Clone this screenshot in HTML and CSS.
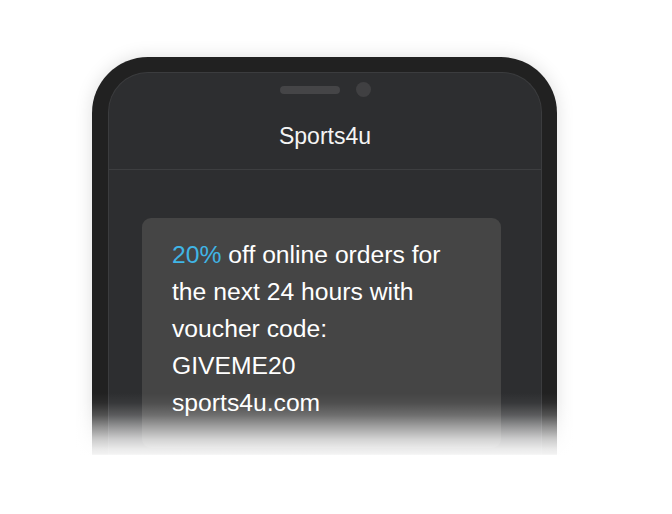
FILE: index.html
```html
<!DOCTYPE html>
<html lang="en">
<head>
<meta charset="utf-8">
<title>Sports4u SMS</title>
<link rel="stylesheet" href="styles.css">
</head>
<body>
<div class="stage">
  <div class="phone">
    <div class="screen">
      <header class="header">
        <div class="notch">
          <span class="speaker"></span>
          <span class="camera"></span>
        </div>
        <div class="title">Sports4u</div>
      </header>
      <div class="thread">
        <div class="bubble">
          <p class="msg"><span class="accent">20%</span> off online orders for<br>the next 24 hours with<br>voucher code:<br>GIVEME20<br>sports4u.com</p>
        </div>
      </div>
    </div>
  </div>
  <div class="fade"></div>
</div>
</body>
</html>
```

FILE: styles.css
```css
* { box-sizing: border-box; }
html, body {
  margin: 0;
  padding: 0;
  background: #ffffff;
}
body {
  width: 672px;
  height: 514px;
  overflow: hidden;
  font-family: "Liberation Sans", Arial, Helvetica, sans-serif;
}
.stage {
  position: relative;
  padding: 57px 0 0 92px;
}
.phone {
  width: 465px;
  height: 398px;
  background: #212121;
  border-radius: 56px 56px 0 0;
  padding: 15px 15px 0 16px;
  overflow: hidden;
  box-shadow: 0 0 18px rgba(0, 0, 0, 0.13);
}
.screen {
  height: 100%;
  background: #2d2e30;
  border: 1px solid #3b3c3e;
  border-bottom: none;
  border-radius: 40px 40px 0 0;
}
.header {
  height: 97px;
  border-bottom: 1px solid #3d3e40;
  padding-top: 9px;
  display: flex;
  flex-direction: column;
  align-items: center;
}
.notch {
  display: flex;
  align-items: center;
  gap: 16px;
  height: 15px;
}
.speaker {
  width: 60px;
  height: 8px;
  border-radius: 4px;
  background: #454547;
}
.camera {
  width: 15px;
  height: 15px;
  border-radius: 50%;
  background: #404042;
}
.title {
  margin-top: 26px;
  font-size: 23px;
  line-height: 27px;
  color: #f4f4f4;
}
.thread {
  padding: 48px 0 0 33px;
}
.bubble {
  width: 359px;
  background: #454545;
  border-radius: 9px;
  padding: 18px 20px 27px 30px;
}
.msg {
  margin: 0;
  font-size: 24.7px;
  line-height: 37px;
  color: #ffffff;
  white-space: nowrap;
}
.accent {
  color: #40b5e6;
}
.fade {
  position: absolute;
  left: 60px;
  top: 393px;
  width: 530px;
  height: 121px;
  background: linear-gradient(to bottom,
    rgba(255,255,255,0) 0px,
    rgba(255,255,255,0.05) 10px,
    rgba(255,255,255,0.22) 22px,
    rgba(255,255,255,0.5) 34px,
    rgba(255,255,255,0.76) 46px,
    rgba(255,255,255,0.9) 56px,
    rgba(255,255,255,0.94) 61px,
    #ffffff 63px,
    #ffffff 100%);
}
```
